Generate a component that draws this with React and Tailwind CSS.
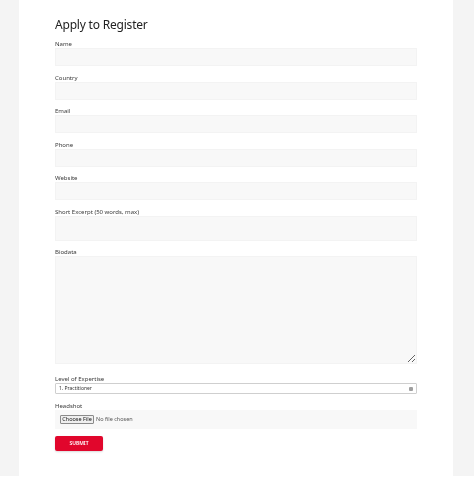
import React from 'react';

const font = { fontFamily: '"Noto Sans", "Liberation Sans", sans-serif' };

function Field({ label, children, className = '' }) {
    return (
        <div className={`mb-[7.5px] ${className}`}>
            <label className="block h-[8px] text-[6px] leading-[8px] text-[#3a3a3a]">{label}</label>
            {children}
        </div>
    );
}

function TextInput() {
    return <input type="text" className="block h-[18px] w-full bg-[#f8f8f8] border border-[#f3f3f3] outline-none px-1 text-[6px]" />;
}

export default function App() {
    return (
        <div className="min-h-[476px] bg-[#f4f4f4] pl-[19px] pr-[21px]" style={font}>
            <div className="min-h-[476px] bg-white px-[36px] pt-[15px] pb-4">
                <h1 className="text-[12px] leading-[20px] tracking-[-0.2px] text-[#222] mb-[5px]">Apply to Register</h1>

                <Field label="Name"><TextInput /></Field>
                <Field label="Country"><TextInput /></Field>
                <Field label="Email"><TextInput /></Field>
                <Field label="Phone"><TextInput /></Field>
                <Field label="Website"><TextInput /></Field>
                <Field label="Short Excerpt (50 words, max)">
                    <textarea className="block h-[25px] w-full bg-[#f8f8f8] border border-[#f3f3f3] outline-none resize-none" />
                </Field>
                <Field label="Biodata" className="mb-[11px]">
                    <textarea className="block h-[108px] w-full bg-[#f8f8f8] border border-[#f3f3f3] outline-none" />
                </Field>
                <Field label="Level of Expertise">
                    <div className="relative h-[11px]">
                        <select className="block h-[11px] min-h-0 w-full appearance-none bg-white border border-[#cfcfcf] rounded-[1px] px-[3px] py-0 text-[5px] leading-[9px] text-[#333] outline-none">
                            <option>1. Practitioner</option>
                        </select>
                        <span className="absolute right-[4px] top-[3.5px] h-[4px] w-[4px] bg-[#a0a0a0] rounded-[1px]" />
                    </div>
                </Field>
                <Field label="Headshot">
                    <div className="flex h-[19px] items-center bg-[#f8f8f8] px-[5px] gap-[2px]">
                        <span className="flex h-[9px] w-[34px] items-center justify-center border border-[#8a8a8a] bg-[#efefef] rounded-[1px] text-[5.5px] text-[#111]">Choose File</span>
                        <span className="text-[5.5px] text-[#555]">No file chosen</span>
                    </div>
                </Field>

                <button className="flex h-[15px] w-[48px] items-center justify-center rounded-[2px] bg-[#e1062c] text-[5px] font-semibold text-white shadow-[0_1px_2px_rgba(0,0,0,0.15)]">
                    SUBMIT
                </button>
            </div>
        </div>
    );
}
